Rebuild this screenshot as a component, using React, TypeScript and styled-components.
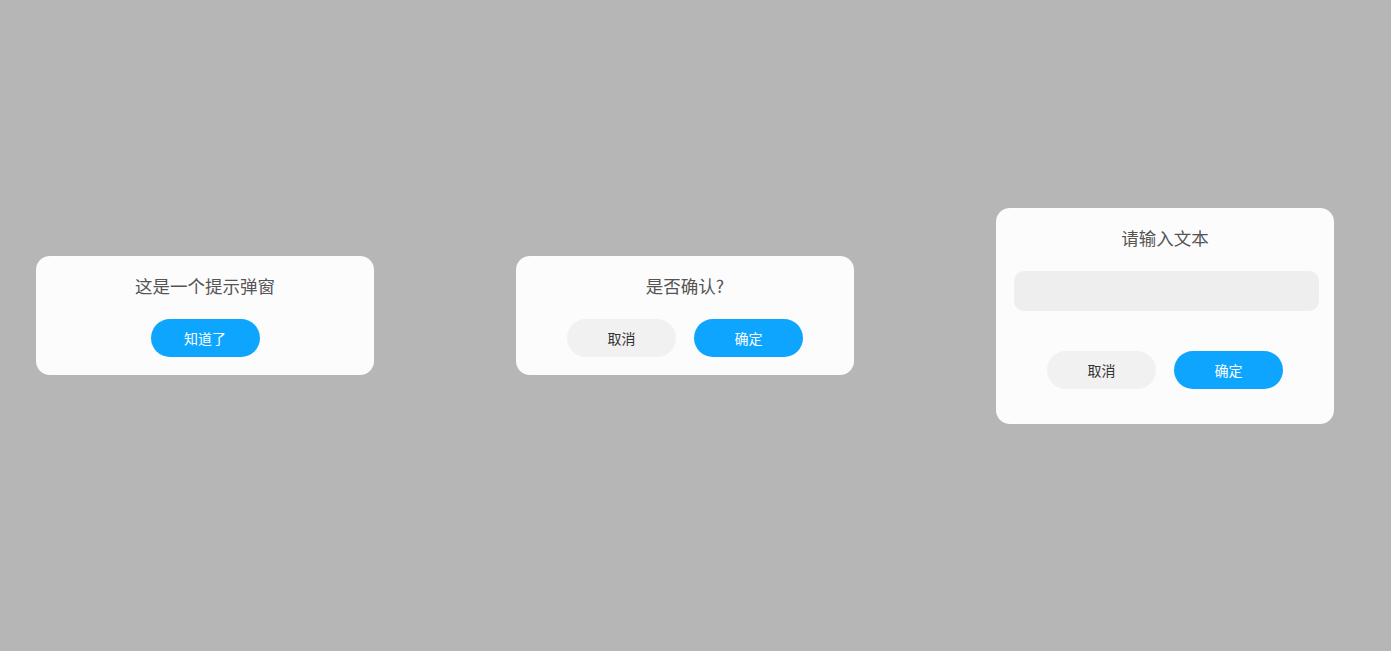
import React from 'react';
import styled, { createGlobalStyle } from 'styled-components';

const GlobalStyle = createGlobalStyle`
  html, body {
    margin: 0;
    padding: 0;
    background: #b6b6b6;
    font-family: "Noto Sans CJK SC", "Noto Sans", sans-serif;
  }
`;

const Page = styled.div`
  width: 100%;
  height: 631px;
  box-sizing: border-box;
  padding-left: 36px;
  display: flex;
  align-items: center;
  gap: 142px;
`;

const Card = styled.div`
  width: 338px;
  box-sizing: border-box;
  background: #fcfcfc;
  border-radius: 14px;
  padding: 17px 17px 18px;
  display: flex;
  flex-direction: column;
  align-items: center;
`;

const Title = styled.div`
  font-size: 17.5px;
  line-height: 26px;
  color: #555555;
`;

const Input = styled.div`
  align-self: stretch;
  height: 40px;
  margin: 20px -2px 0 1px;
  background: #eeeeee;
  border-radius: 10px;
`;

const Actions = styled.div<{ $spaced?: boolean }>`
  display: flex;
  gap: 18px;
  margin-top: ${(p) => (p.$spaced ? '40px' : '20px')};
  margin-bottom: ${(p) => (p.$spaced ? '17px' : '0')};
`;

const Button = styled.button<{ $primary?: boolean }>`
  width: 109px;
  height: 38px;
  border: none;
  border-radius: 19px;
  font-family: inherit;
  font-size: 14px;
  background: ${(p) => (p.$primary ? '#0ea5ff' : '#f1f1f1')};
  color: ${(p) => (p.$primary ? '#ffffff' : '#333333')};
  padding: 0;
  cursor: pointer;
`;

export default function App() {
  return (
    <>
      <GlobalStyle />
      <Page>
        <Card>
          <Title>这是一个提示弹窗</Title>
          <Actions>
            <Button $primary>知道了</Button>
          </Actions>
        </Card>
        <Card>
          <Title>是否确认?</Title>
          <Actions>
            <Button>取消</Button>
            <Button $primary>确定</Button>
          </Actions>
        </Card>
        <Card>
          <Title>请输入文本</Title>
          <Input />
          <Actions $spaced>
            <Button>取消</Button>
            <Button $primary>确定</Button>
          </Actions>
        </Card>
      </Page>
    </>
  );
}
